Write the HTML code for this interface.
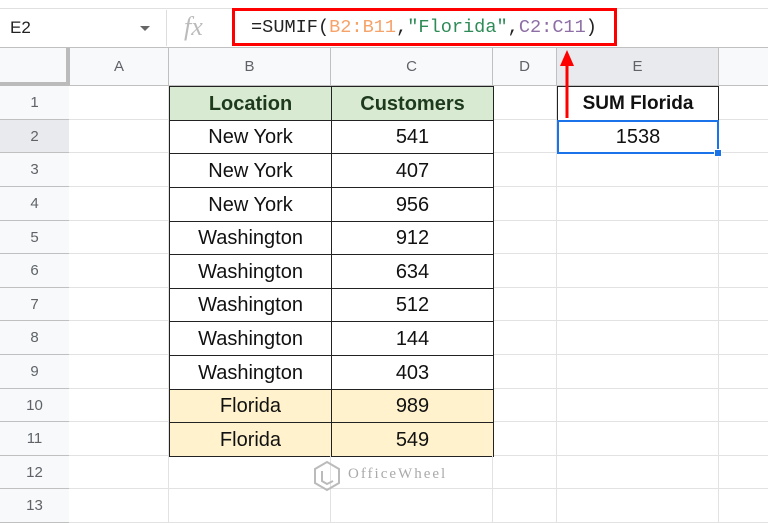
<!DOCTYPE html><html><head><style>
body{margin:0;width:768px;height:516px;overflow:hidden;background:#fff;font-family:"Liberation Sans",Arial,sans-serif;position:relative}
.a{position:absolute;box-sizing:border-box}
.ch{top:48px;height:38px;border-right:1px solid #c0c0c0;border-bottom:1px solid #c0c0c0;background:#f8f9fa;color:#5f6368;font-size:15px;text-align:center;line-height:38px}
.rh{left:0;width:69px;border-bottom:1px solid #c0c0c0;background:#f8f9fa;color:#5f6368;font-size:15px;text-align:center}
.c{font-size:20px;color:#111;text-align:center;border:1px solid #222}
.g{border-bottom:1px solid #e2e2e2;border-right:1px solid #e2e2e2}
</style></head><body>
<div class="a" style="left:0;top:8px;width:768px;height:40px;border-top:1px solid #e0e0e0;border-bottom:1px solid #c0c0c0"></div>
<div class="a" style="left:10px;top:14px;font-size:17px;line-height:28px;color:#222">E2</div>
<div class="a" style="left:140px;top:26px;width:0;height:0;border-left:5px solid transparent;border-right:5px solid transparent;border-top:5px solid #666"></div>
<div class="a" style="left:166px;top:10px;width:1px;height:36px;background:#ddd"></div>
<div class="a" style="left:184px;top:10px;font-family:'Liberation Serif',serif;font-style:italic;font-size:26px;color:#bbb;line-height:34px">fx</div>
<div class="a" style="left:232px;top:8px;width:385px;height:38px;border:3px solid #f00"></div>
<div class="a" style="left:251px;top:14px;font-family:'Liberation Mono',monospace;font-size:18.6px;line-height:28px;color:#222">=SUMIF(<span style="color:#f6a36a">B2:B11</span>,<span style="color:#2e8b57">"Florida"</span>,<span style="color:#8d6fa5">C2:C11</span>)</div>
<div class="a ch" style="left:0;width:70px;background:#f8f9fa;border-right:4px solid #bbb;border-bottom:4px solid #bbb"></div>
<div class="a ch" style="left:70px;width:99px">A</div>
<div class="a ch" style="left:169px;width:162px">B</div>
<div class="a ch" style="left:331px;width:162px">C</div>
<div class="a ch" style="left:493px;width:64px">D</div>
<div class="a ch" style="left:557px;width:162px;background:#e8eaed">E</div>
<div class="a ch" style="left:719px;width:60px"></div>
<div class="a" style="left:66px;top:86px;width:3px;height:430px;background:#d0d0d0"></div>
<div id="rows"></div>
<script>
var tops=[86,120,153,187,221,254,288,321,355,389,422,456,489,523];
var B=["Location","New York","New York","New York","Washington","Washington","Washington","Washington","Washington","Florida","Florida"];
var C=["Customers","541","407","956","912","634","512","144","403","989","549"];
var h="";
for(var i=0;i<13;i++){var t=tops[i],ht=tops[i+1]-t;
h+='<div class="a rh" style="top:'+t+'px;height:'+ht+'px;line-height:'+ht+'px;'+(i==1?'background:#e8eaed;':'')+'">'+(i+1)+'</div>';
h+='<div class="a g" style="left:69px;top:'+t+'px;width:100px;height:'+ht+'px"></div>';
h+='<div class="a g" style="left:493px;top:'+t+'px;width:64px;height:'+ht+'px"></div>';
h+='<div class="a g" style="left:719px;top:'+t+'px;width:60px;height:'+ht+'px"></div>';
if(i<11){var bg=i==0?'#d9ead3':(i>=9?'#fff2cc':'#fff'),fw=i==0?'bold':'normal',col=i==0?'#1d3a1d':'#111';
h+='<div class="a c" style="left:169px;top:'+t+'px;width:163px;height:'+(ht+1)+'px;line-height:'+ht+'px;background:'+bg+';font-weight:'+fw+';color:'+col+'">'+B[i]+'</div>';
h+='<div class="a c" style="left:331px;top:'+t+'px;width:163px;height:'+(ht+1)+'px;line-height:'+ht+'px;background:'+bg+';font-weight:'+fw+';color:'+col+'">'+C[i]+'</div>';}
else{h+='<div class="a g" style="left:169px;top:'+t+'px;width:162px;height:'+ht+'px"></div><div class="a g" style="left:331px;top:'+t+'px;width:162px;height:'+ht+'px"></div>';}
if(i>1)h+='<div class="a g" style="left:557px;top:'+t+'px;width:162px;height:'+ht+'px"></div>';}
document.getElementById('rows').innerHTML=h;
</script>
<div class="a" style="left:557px;top:86px;width:162px;height:35px;border:1px solid #222;border-bottom:none;background:#fff;text-align:center;font-weight:bold;font-size:19px;line-height:34px;color:#111">SUM Florida</div>
<div class="a" style="left:557px;top:120px;width:162px;height:34px;border:2px solid #1a73e8;background:#fff;text-align:center;font-size:20px;line-height:30px;color:#111">1538</div>
<div class="a" style="left:714px;top:149px;width:8px;height:8px;background:#1a73e8;border:1px solid #fff"></div>
<svg class="a" style="left:555px;top:48px" width="24" height="72"><line x1="12" y1="70" x2="12" y2="14" stroke="#f00" stroke-width="3"/><polygon points="5,18 12,2 19,18" fill="#f00"/></svg>
<svg class="a" style="left:312px;top:460px" width="30" height="32"><polygon points="15,2 27,9 27,23 15,30 3,23 3,9" fill="none" stroke="#bbb" stroke-width="2"/><path d="M10,11 V21 L15,24 L21,21" fill="none" stroke="#bbb" stroke-width="2"/></svg>
<div class="a" style="left:348px;top:466px;font-family:'Liberation Serif',serif;font-size:15px;letter-spacing:2px;color:#aaa">OfficeWheel</div>
</body></html>
